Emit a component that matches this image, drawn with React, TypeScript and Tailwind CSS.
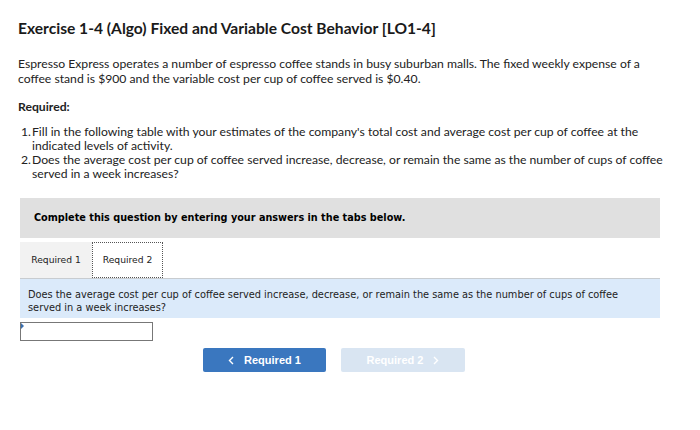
import React from "react";

export default function App() {
  return (
    <div className="w-[700px] h-[430px] bg-white text-[#222] font-['Lato',sans-serif]">
      <div className="pl-[18px] pt-[18px] pr-[36px]">
        <h1 className="text-[15.6px] font-bold leading-[20px] text-[#1a1a1a]">
          Exercise 1-4 (Algo) Fixed and Variable Cost Behavior [LO1-4]
        </h1>
        <p className="mt-[18px] text-[12.2px] leading-[15px]">
          Espresso Express operates a number of espresso coffee stands in busy suburban malls. The fixed weekly expense of a
          <br />
          coffee stand is $900 and the variable cost per cup of coffee served is $0.40.
        </p>
        <p className="mt-[13px] text-[12.2px] font-bold leading-[15px]">Required:</p>
        <ol className="mt-[11px] pl-[3px] text-[12.2px] leading-[14px]">
          <li className="flex">
            <span className="w-[11px] shrink-0">1.</span>
            <span>
              Fill in the following table with your estimates of the company's total cost and average cost per cup of coffee at the
              <br />
              indicated levels of activity.
            </span>
          </li>
          <li className="flex">
            <span className="w-[11px] shrink-0">2.</span>
            <span>
              Does the average cost per cup of coffee served increase, decrease, or remain the same as the number of cups of coffee
              <br />
              served in a week increases?
            </span>
          </li>
        </ol>
      </div>

      <div className="ml-[20px] w-[640px] font-['DejaVu_Sans',Verdana,sans-serif]">
        <div className="mt-[17px] h-[40px] bg-[#e0e0e0] flex items-center pl-[14px] text-[9.7px] font-bold text-black">
          Complete this question by entering your answers in the tabs below.
        </div>

        <div className="mt-[4px] flex h-[36px]">
          <div className="w-[72px] bg-[#f2f2f2] flex items-center justify-center text-[9.2px] text-[#222]">
            Required 1
          </div>
          <div className="w-[71px] border border-dotted border-[#555] flex items-center justify-center text-[9.2px] text-[#222]">
            Required 2
          </div>
        </div>

        <div className="h-[40px] bg-[#dbeafa] border-t border-[#c8ccd0] px-[8px] pt-[9px] text-[9.8px] leading-[13px] text-[#222]">
          Does the average cost per cup of coffee served increase, decrease, or remain the same as the number of cups of coffee
          <br />
          served in a week increases?
        </div>

        <div className="relative mt-[4px] w-[133px] h-[19px] border border-[#777]">
          <div className="absolute left-0 top-0 w-0 h-0 border-t-[3px] border-b-[3px] border-l-[3px] border-t-transparent border-b-transparent border-l-[#3a6fb0]" />
        </div>
      </div>

      <div className="mt-[7px] flex gap-[15px] pl-[203px] font-['Liberation_Sans',Arial,sans-serif]">
        <button className="w-[123px] h-[24px] bg-[#3a77bf] rounded-[2px] text-white text-[11px] font-bold flex items-center justify-center gap-[10px]">
          <svg width="6" height="9" viewBox="0 0 6 9" fill="none">
            <path d="M5 1L1.5 4.5L5 8" stroke="white" strokeWidth="1.4" />
          </svg>
          Required 1
        </button>
        <button className="w-[124px] h-[24px] bg-[#d9e5f2] rounded-[2px] text-white text-[11px] font-bold flex items-center justify-center gap-[10px]">
          Required 2
          <svg width="6" height="9" viewBox="0 0 6 9" fill="none">
            <path d="M1 1L4.5 4.5L1 8" stroke="white" strokeWidth="1.4" />
          </svg>
        </button>
      </div>
    </div>
  );
}
